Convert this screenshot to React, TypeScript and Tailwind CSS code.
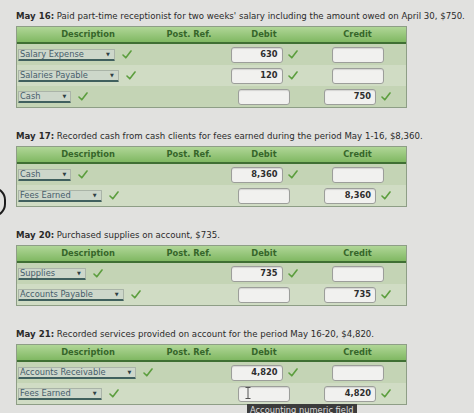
import React from "react";

type Row = { account: string; debit?: string; credit?: string };
type Entry = { date: string; text: string; rows: Row[] };

const entries: Entry[] = [
  {
    date: "May 16:",
    text: "Paid part-time receptionist for two weeks' salary including the amount owed on April 30, $750.",
    rows: [
      { account: "Salary Expense", debit: "630" },
      { account: "Salaries Payable", debit: "120" },
      { account: "Cash", credit: "750" },
    ],
  },
  {
    date: "May 17:",
    text: "Recorded cash from cash clients for fees earned during the period May 1-16, $8,360.",
    rows: [
      { account: "Cash", debit: "8,360" },
      { account: "Fees Earned", credit: "8,360" },
    ],
  },
  {
    date: "May 20:",
    text: "Purchased supplies on account, $735.",
    rows: [
      { account: "Supplies", debit: "735" },
      { account: "Accounts Payable", credit: "735" },
    ],
  },
  {
    date: "May 21:",
    text: "Recorded services provided on account for the period May 16-20, $4,820.",
    rows: [
      { account: "Accounts Receivable", debit: "4,820" },
      { account: "Fees Earned", credit: "4,820" },
    ],
  },
];

const Check = () => (
  <svg width="10" height="9" viewBox="0 0 10 9" className="shrink-0">
    <path d="M1 5 L3.8 7.8 L9 1" fill="none" stroke="#5c9e3e" strokeWidth="1.6" strokeLinecap="round" strokeLinejoin="round" />
  </svg>
);

const AccountSelect = ({ label }: { label: string }) => (
  <div className="flex items-center gap-[7px]">
    <div className="flex h-[12px] items-center rounded-[1px] border border-[#aab4a8] border-b-2 border-b-[#40605e] bg-[#cdd7ca] pl-[1px] pr-[4px]">
      <span className="leading-none text-[#475d6a]">{label}</span>
      <span className="ml-auto pl-[22px] text-[5px] leading-none text-[#2f3f44]">▼</span>
    </div>
    <Check />
  </div>
);

const NumberBox = ({ value }: { value?: string }) => (
  <div className="flex h-[16px] w-[52px] items-center justify-end rounded-[3px] border border-[#9c9e9a] bg-[#f1f1ef] pr-[4px] font-bold text-[#2e2e2e] shadow-[inset_0_1px_1px_rgba(0,0,0,0.12)]">
    {value}
  </div>
);

const AmountCell = ({ value, tooltip }: { value?: string; tooltip?: boolean }) => (
  <div className="relative flex items-center justify-center gap-[5px]">
    <NumberBox value={value} />
    {value && <Check />}
    {tooltip && (
      <>
        <svg width="6" height="12" viewBox="0 0 6 12" className="absolute left-[26px] top-[1px]">
          <path d="M0.5 0.5 H5.5 M3 0.5 V11.5 M0.5 11.5 H5.5" stroke="#555" strokeWidth="1" fill="none" />
        </svg>
        <div className="absolute left-[28px] top-[18px] whitespace-nowrap bg-[#3c3c3c] px-[3px] pt-[1px] leading-[11px] text-[#dcdcdc]">
          Accounting numeric field
        </div>
      </>
    )}
  </div>
);

const JournalTable = ({ entry, last }: { entry: Entry; last: boolean }) => (
  <div>
    <div className="h-[12px] whitespace-nowrap text-[8.6px] leading-[12px] text-[#2a2a2a]">
      <span className="font-bold">{entry.date}</span> {entry.text}
    </div>
    <div className="mt-[4px] w-[391px] border border-[#8e9e86] bg-[#c8d6ba]">
      <div className="grid h-[17px] grid-cols-[142px_60px_90px_97px] items-center border-b-2 border-[#3f6f33] bg-gradient-to-b from-[#b0d697] to-[#80b862] font-bold text-[#36662a]">
        <div className="text-center">Description</div>
        <div className="text-center">Post. Ref.</div>
        <div className="text-center">Debit</div>
        <div className="text-center">Credit</div>
      </div>
      {entry.rows.map((row, i) => (
        <div
          key={row.account + i}
          className={`grid h-[21px] grid-cols-[142px_60px_90px_97px] items-center ${i % 2 === 0 ? "bg-[#c4d4b5]" : "bg-[#d0dcc4]"}`}
        >
          <div className="pl-[1px]">
            <AccountSelect label={row.account} />
          </div>
          <div />
          <AmountCell value={row.debit} tooltip={last && i === 1} />
          <AmountCell value={row.credit} />
        </div>
      ))}
    </div>
  </div>
);

export default function App() {
  return (
    <div className="relative h-[413px] w-[474px] overflow-hidden bg-[#e1e1df] pl-[16px] pt-[10px] font-['DejaVu_Sans',sans-serif] text-[8.3px]">
      <div className="flex flex-col gap-[22px]">
        {entries.map((e, i) => (
          <JournalTable key={e.date} entry={e} last={i === entries.length - 1} />
        ))}
      </div>
      <div className="absolute left-[-20px] top-[187px] h-[30px] w-[26px] rounded-full border-2 border-[#1c1c1c]" />
    </div>
  );
}
